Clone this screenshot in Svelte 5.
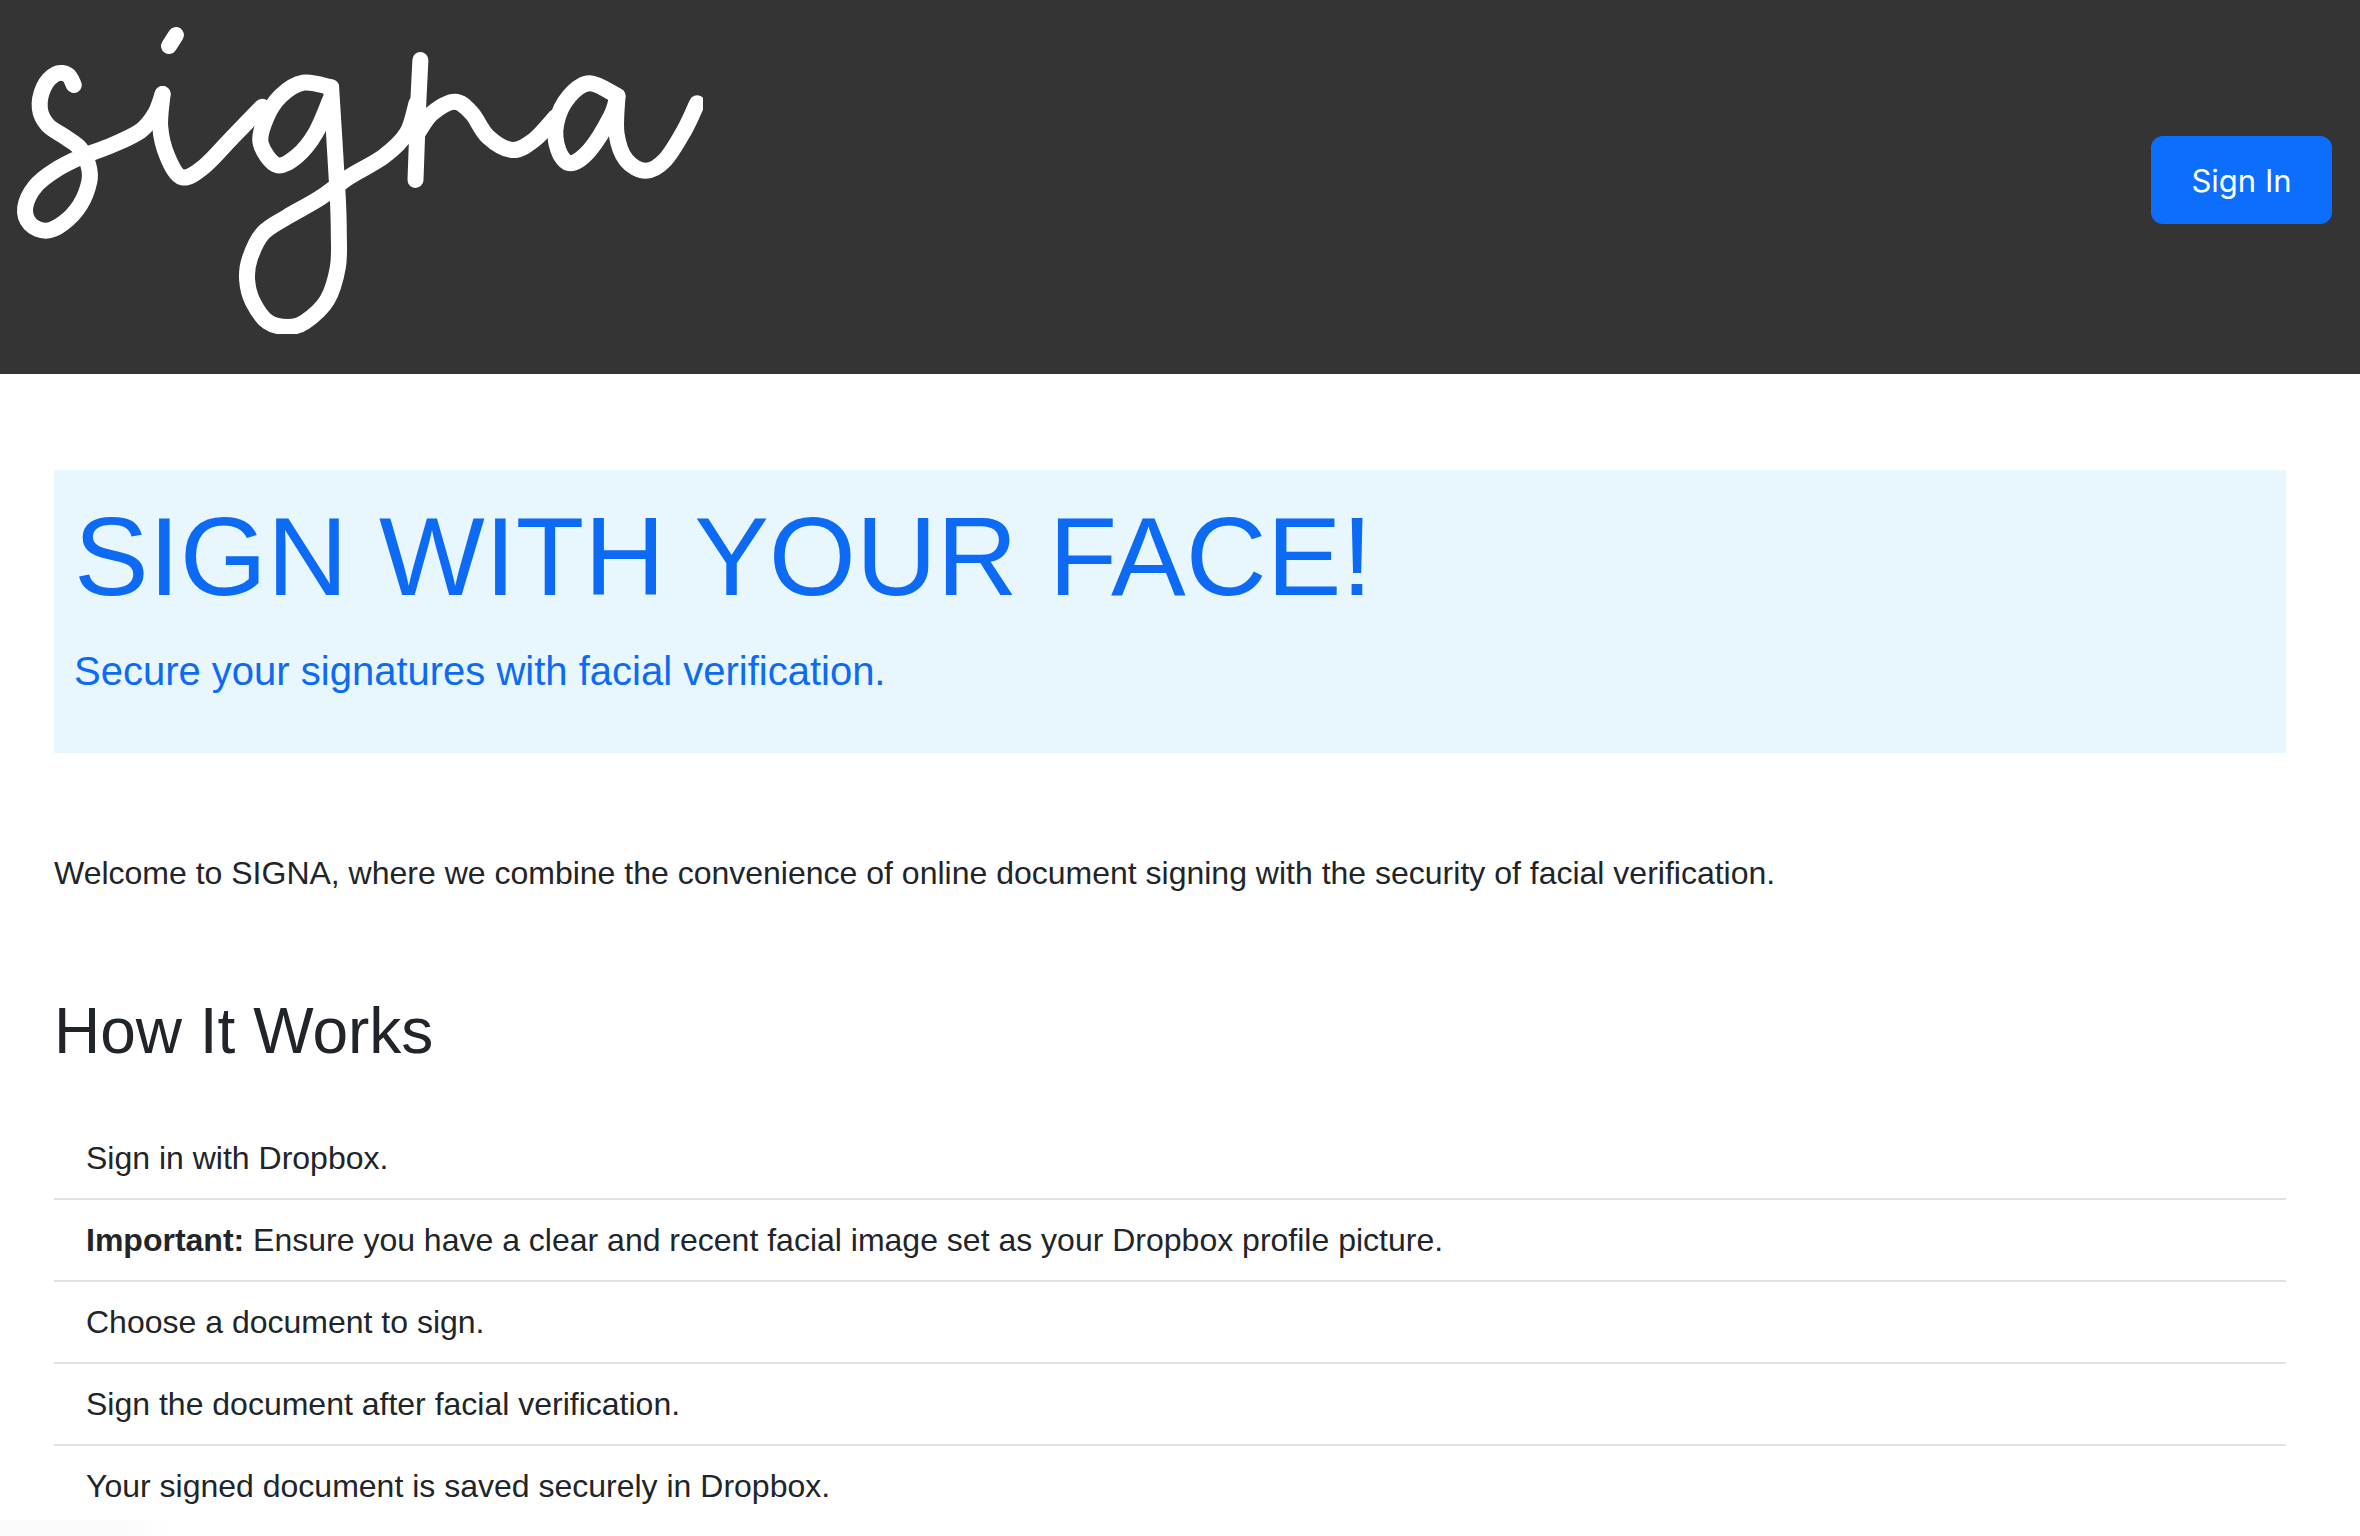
<script lang="ts">
	// logo strokes, traced from the reference crop (x at 2.06x, y at 3x)
	const strokes: number[][][] = [
		[[152,255],[140,225],[115,222],[90,262],[82,325],[98,375],[135,412],[165,445],[182,495],[184,545],[165,615],[130,670],[95,692],[62,672],[52,622],[72,560],[112,512],[165,472],[230,436],[290,392],[320,340],[335,282]],
		[[335,282],[330,380],[345,470],[375,532],[420,500],[480,410],[540,320]],
		[[682,262],[625,248],[578,288],[548,355],[537,430],[570,495],[612,468],[650,400],[680,300]],
		[[682,262],[688,400],[696,600],[698,699],[696,801],[674,900],[628,966],[593,981],[552,966],[521,906],[509,840],[515,774],[542,699],[591,651],[659,594],[720,530],[790,470],[838,400],[858,310]],
		[[866,180],[862,300],[856,540]],
		[[860,400],[890,340],[937,305],[972,340],[1005,410],[1055,450],[1100,420],[1145,350]],
		[[1272,288],[1215,250],[1172,290],[1146,370],[1150,450],[1175,490],[1215,450],[1258,350],[1272,288]],
		[[1272,288],[1270,400],[1290,480],[1330,512],[1370,480],[1410,390],[1436,310]]
	];

	function smooth(pts: number[][]): string {
		const p = pts.map(([x, y]) => [x / 2.06, y / 3]);
		let d = `M${p[0][0].toFixed(1)} ${p[0][1].toFixed(1)}`;
		for (let i = 0; i < p.length - 1; i++) {
			const a = p[i - 1] || p[i];
			const b = p[i];
			const c = p[i + 1];
			const e = p[i + 2] || c;
			const c1 = [b[0] + (c[0] - a[0]) / 6, b[1] + (c[1] - a[1]) / 6];
			const c2 = [c[0] - (e[0] - b[0]) / 6, c[1] - (e[1] - b[1]) / 6];
			d += `C${c1[0].toFixed(1)} ${c1[1].toFixed(1)} ${c2[0].toFixed(1)} ${c2[1].toFixed(1)} ${c[0].toFixed(1)} ${c[1].toFixed(1)}`;
		}
		return d;
	}
</script>

<header class="topbar">
	<svg class="logo" viewBox="0 0 703 334" role="img" aria-label="signa">
		{#each strokes as s}
			<path d={smooth(s)} />
		{/each}
		<path d="M176 35L169 46" />
	</svg>
	<button class="signin">Sign In</button>
</header>

<main class="content">
	<section class="hero">
		<h1>SIGN WITH YOUR FACE!</h1>
		<p>Secure your signatures with facial verification.</p>
	</section>

	<p class="welcome">Welcome to SIGNA, where we combine the convenience of online document signing with the security of facial verification.</p>

	<h2>How It Works</h2>

	<ul class="steps">
		<li>Sign in with Dropbox.</li>
		<li><strong>Important:</strong> Ensure you have a clear and recent facial image set as your Dropbox profile picture.</li>
		<li>Choose a document to sign.</li>
		<li>Sign the document after facial verification.</li>
		<li>Your signed document is saved securely in Dropbox.</li>
	</ul>
</main>

<div class="corner-shade"></div>

<style>
	:global(html), :global(body) {
		margin: 0;
		height: 1536px;
		overflow: hidden;
		background: #fff;
	}

	.topbar {
		display: flex;
		align-items: flex-start;
		justify-content: space-between;
		height: 374px;
		padding-right: 28px;
		background: #343434;
	}

	.logo {
		display: block;
		width: 703px;
		height: 334px;
		fill: none;
		stroke: #fff;
		stroke-width: 16;
		stroke-linecap: round;
		stroke-linejoin: round;
	}

	.signin {
		margin-top: 136px;
		width: 181px;
		height: 88px;
		border: 0;
		border-radius: 12px;
		background: #0d6efd;
		color: #fff;
		font-family: Inter, "Liberation Sans", sans-serif;
		font-size: 31px;
	}

	.content {
		padding: 96px 74px 0 54px;
		font-family: "Liberation Sans", Arial, sans-serif;
		color: #212529;
		font-size: 32px;
		line-height: 48px;
	}

	.hero {
		height: 283px;
		box-sizing: border-box;
		padding: 20px;
		background: #e8f6fe;
		color: #0d6af5;
	}

	.hero h1 {
		margin: 0 0 17px;
		font-size: 112px;
		font-weight: 400;
		line-height: 1.2;
	}

	.hero p {
		margin: 0;
		font-size: 40px;
		line-height: 60px;
	}

	.welcome {
		margin: 96px 0 0;
	}

	h2 {
		margin: 96px 0 0;
		font-size: 64px;
		font-weight: 400;
		line-height: 1.2;
	}

	.steps {
		list-style: none;
		margin: 48px 0 0;
		padding: 0;
	}

	.steps li {
		padding: 16px 32px;
		border-bottom: 2px solid #dee2e6;
	}

	.steps li:last-child {
		border-bottom: 0;
	}

	.corner-shade {
		position: fixed;
		left: 0;
		bottom: 0;
		width: 170px;
		height: 16px;
		background: linear-gradient(to right, #fafafa 70%, #fff);
	}
</style>
